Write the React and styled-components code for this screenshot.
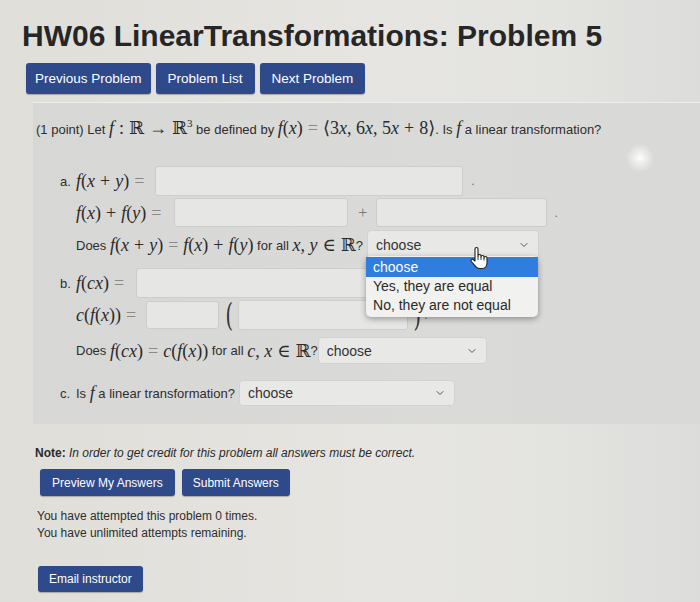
import React from 'react';
import styled, { createGlobalStyle } from 'styled-components';
import { ChevronDown } from 'lucide-react';

const Global = createGlobalStyle`
  html, body { margin: 0; padding: 0; background: #e2e1dd; }
  body { font-family: "Liberation Sans", Arial, sans-serif; color: #2a2a2a; }
  #root { width: 700px; height: 602px; }
`;

const Page = styled.div`
  width: 700px;
  height: 602px;
  overflow: hidden;
  position: relative;
  background: linear-gradient(90deg, #dfded9 0%, #e6e5e1 55%, #e3e3e0 80%, #dcdcda 100%);
  display: flex;
  flex-direction: column;
`;

const Title = styled.h1`
  margin: 18px 0 0 22px;
  font-size: 30px;
  line-height: 36px;
  font-weight: bold;
  color: #262626;
  white-space: nowrap;
`;

const Nav = styled.div`
  display: flex;
  gap: 5px;
  margin: 9px 0 0 26px;
`;

const Button = styled.button`
  height: ${(p) => p.$h || 31}px;
  padding: 0 ${(p) => p.$px || 9}px;
  background: #2e4a8b;
  color: #fff;
  border: none;
  border-radius: 3px;
  font-family: "Liberation Sans", Arial, sans-serif;
  font-size: ${(p) => p.$fs || 13.5}px;
  box-shadow: 0 1px 1px rgba(0, 0, 0, 0.25);
  white-space: nowrap;
`;

const Panel = styled.div`
  margin: 8px 0 0 33px;
  padding: 15px 0 18px 3px;
  border-top: 1px solid #efefed;
  background:
    radial-gradient(circle at 607px 55px, #ffffff 0, #f2f2f0 4px, rgba(230, 230, 228, 0) 14px),
    linear-gradient(90deg, #d7d7d5 0%, #dadad8 60%, #d9d9d7 100%);
  font-size: 13px;
  color: #2e2e2e;
`;

const Statement = styled.div`
  height: 20px;
  line-height: 20px;
  white-space: nowrap;
`;

const Parts = styled.div`
  margin-left: 24px;
  display: flex;
  flex-direction: column;
`;

const Row = styled.div`
  display: flex;
  align-items: center;
  height: ${(p) => p.$h}px;
  margin-top: ${(p) => p.$mt}px;
  padding-left: ${(p) => (p.$indent ? 16 : 0)}px;
  white-space: nowrap;
`;

const Label = styled.span`
  width: 16px;
`;

const M = styled.span`
  font-family: "Liberation Serif", "DejaVu Serif", serif;
  font-size: 18px;
  line-height: 20px;
  color: #2a2a2a;
`;

const V = styled.i`
  font-family: "Liberation Serif", "DejaVu Serif", serif;
  font-style: italic;
  font-size: 18px;
  line-height: 20px;
`;

const Op = styled.span`
  margin: 0 ${(p) => p.$sp ?? 5}px;
  color: ${(p) => (p.$light ? '#8a8a8a' : 'inherit')};
`;

const Sup = styled.sup`
  font-size: 11px;
  line-height: 0;
`;

const Field = styled.input`
  box-sizing: border-box;
  width: ${(p) => p.$w}px;
  height: ${(p) => p.$h}px;
  margin-left: ${(p) => p.$ml || 0}px;
  background: #e6e6e4;
  border: 1px solid #cdcdcb;
  border-radius: 3px;
  padding: 0;
  outline: none;
`;

const Dot = styled.span`
  margin-left: ${(p) => p.$ml || 7}px;
  color: #666;
  font-size: 12px;
`;

const Plus = styled.span`
  font-family: "Liberation Serif", serif;
  font-size: 16px;
  color: #777;
  margin: 0 9px 0 10px;
`;

const Paren = styled.span`
  font-family: "DejaVu Serif", "Liberation Serif", serif;
  font-size: 32px;
  font-weight: 200;
  line-height: 30px;
  color: #333;
  margin: 0 ${(p) => p.$mr || 0}px 0 ${(p) => p.$ml || 0}px;
  transform: scaleX(0.6);
`;

const SelectBox = styled.div`
  position: relative;
  box-sizing: border-box;
  width: ${(p) => p.$w}px;
  height: ${(p) => p.$h}px;
  margin-left: ${(p) => p.$ml ?? 4}px;
  background: #e8e8e6;
  border: 1px solid #d2d2d0;
  border-radius: 4px;
  display: flex;
  align-items: center;
  justify-content: space-between;
  padding: 0 8px 0 8px;
  font-size: 14px;
  color: #333;
`;

const Menu = styled.div`
  position: absolute;
  left: -2px;
  top: ${(p) => p.$top}px;
  width: 172px;
  background: #f1f1f0;
  border-radius: 5px;
  box-shadow: 0 2px 6px rgba(0, 0, 0, 0.35);
  padding: 1px 0 2px;
  z-index: 5;
  font-size: 14px;
`;

const Option = styled.div`
  height: ${(p) => (p.$active ? 20 : 19)}px;
  line-height: ${(p) => (p.$active ? 20 : 19)}px;
  padding-left: 7px;
  background: ${(p) => (p.$active ? '#2f7ddc' : 'transparent')};
  color: ${(p) => (p.$active ? '#fff' : '#2a2a2a')};
`;

const Cursor = styled.svg`
  position: absolute;
  left: 102px;
  top: 15px;
  z-index: 6;
`;

const Note = styled.div`
  margin: 20px 0 0 35px;
  font-size: 12px;
  line-height: 18px;
  color: #2a2a2a;
  b { font-weight: bold; }
  i { font-style: italic; }
`;

const Actions = styled.div`
  display: flex;
  gap: 7px;
  margin: 7px 0 0 40px;
`;

const Info = styled.div`
  margin: 12px 0 0 37px;
  font-size: 12px;
  line-height: 17px;
  color: #2e2e2e;
`;

const Footer = styled.div`
  margin: 24px 0 0 38px;
`;

function Select({ w, h, ml, children }) {
  return (
    <SelectBox $w={w} $h={h} $ml={ml}>
      <span>choose</span>
      <ChevronDown size={12} strokeWidth={2} color="#555" />
      {children}
    </SelectBox>
  );
}

const EQ = () => <Op $light>=</Op>;
const PL = () => <Op>+</Op>;

export default function App() {
  return (
    <>
      <Global />
      <Page>
        <Title>HW06 LinearTransformations: Problem 5</Title>
        <Nav>
          <Button>Previous Problem</Button>
          <Button $px={12}>Problem List</Button>
          <Button $px={12}>Next Problem</Button>
        </Nav>
        <Panel>
          <Statement>
            (1 point) Let{' '}
            <M>
              <V>f</V>
              <Op>:</Op>ℝ<Op>→</Op>ℝ<Sup>3</Sup>
            </M>{' '}
            be defined by{' '}
            <M>
              <V>f</V>(<V>x</V>)<EQ />⟨3<V>x</V>, 6<V>x</V>, 5<V>x</V>
              <PL />8⟩
            </M>
            . Is <V>f</V> a linear transformation?
          </Statement>
          <Parts>
            <Row $h={30} $mt={28}>
              <Label>a.</Label>
              <M>
                <V>f</V>(<V>x</V>
                <PL />
                <V>y</V>)<EQ />
              </M>
              <Field $w={308} $h={30} $ml={6} readOnly />
              <Dot $ml={8}>.</Dot>
            </Row>
            <Row $h={29} $mt={2} $indent>
              <M>
                <V>f</V>(<V>x</V>)<PL />
                <V>f</V>(<V>y</V>)<EQ />
              </M>
              <Field $w={174} $h={29} $ml={8} readOnly />
              <Plus>+</Plus>
              <Field $w={171} $h={29} readOnly />
              <Dot>.</Dot>
            </Row>
            <Row $h={30} $mt={3} $indent>
              Does&nbsp;
              <M>
                <V>f</V>(<V>x</V>
                <PL />
                <V>y</V>)<EQ />
                <V>f</V>(<V>x</V>)<PL />
                <V>f</V>(<V>y</V>)
              </M>
              &nbsp;for all&nbsp;
              <M>
                <V>x</V>, <V>y</V>
                <Op>∈</Op>ℝ
              </M>
              ?
              <Select w={172} h={30} ml={4}>
                <Menu $top={25}>
                  <Option $active>choose</Option>
                  <Option>Yes, they are equal</Option>
                  <Option>No, they are not equal</Option>
                </Menu>
                <Cursor width="18" height="24" viewBox="0 0 18 24">
                  <path
                    d="M5 3a1.5 1.5 0 0 1 3 0v7a1.5 1.5 0 0 1 3 0v1a1.5 1.5 0 0 1 3 0v1a1.5 1.5 0 0 1 3 0v5c0 3-2 5.5-5 5.5H9.5c-2 0-3-1-4-2.2L1.3 15.5a1.5 1.5 0 0 1 2.2-2L5 15Z"
                    fill="#fff"
                    stroke="#1e1e1e"
                    strokeWidth="1.1"
                    strokeLinejoin="round"
                  />
                  <path d="M8 10v4M11 11v3M14 12v2.5" stroke="#1e1e1e" strokeWidth="0.9" fill="none" />
                </Cursor>
              </Select>
            </Row>
            <Row $h={30} $mt={8}>
              <Label>b.</Label>
              <M>
                <V>f</V>(<V>cx</V>)<EQ />
              </M>
              <Field $w={310} $h={30} $ml={7} readOnly />
            </Row>
            <Row $h={30} $mt={2} $indent>
              <M>
                <V>c</V>(<V>f</V>(<V>x</V>))<EQ />
              </M>
              <Field $w={73} $h={28} $ml={5} readOnly />
              <Paren $ml={4} $mr={2}>(</Paren>
              <Field $w={170} $h={30} readOnly />
              <Paren $ml={3}>)</Paren>
              <Dot $ml={1}>.</Dot>
            </Row>
            <Row $h={27} $mt={7} $indent>
              Does&nbsp;
              <M>
                <V>f</V>(<V>cx</V>)<EQ />
                <V>c</V>(<V>f</V>(<V>x</V>))
              </M>
              &nbsp;for all&nbsp;
              <M>
                <V>c</V>, <V>x</V>
                <Op>∈</Op>ℝ
              </M>
              ?
              <Select w={169} h={27} ml={0} />
            </Row>
            <Row $h={26} $mt={16}>
              <Label>c.</Label>
              Is&nbsp;<V>f</V>&nbsp;a linear transformation?
              <Select w={216} h={26} ml={4} />
            </Row>
          </Parts>
        </Panel>
        <Note>
          <b>Note:</b> <i>In order to get credit for this problem all answers must be correct.</i>
        </Note>
        <Actions>
          <Button $h={27} $fs={12} $px={12}>Preview My Answers</Button>
          <Button $h={27} $fs={12} $px={11}>Submit Answers</Button>
        </Actions>
        <Info>
          You have attempted this problem 0 times.
          <br />
          You have unlimited attempts remaining.
        </Info>
        <Footer>
          <Button $h={26} $fs={12} $px={11}>Email instructor</Button>
        </Footer>
      </Page>
    </>
  );
}
